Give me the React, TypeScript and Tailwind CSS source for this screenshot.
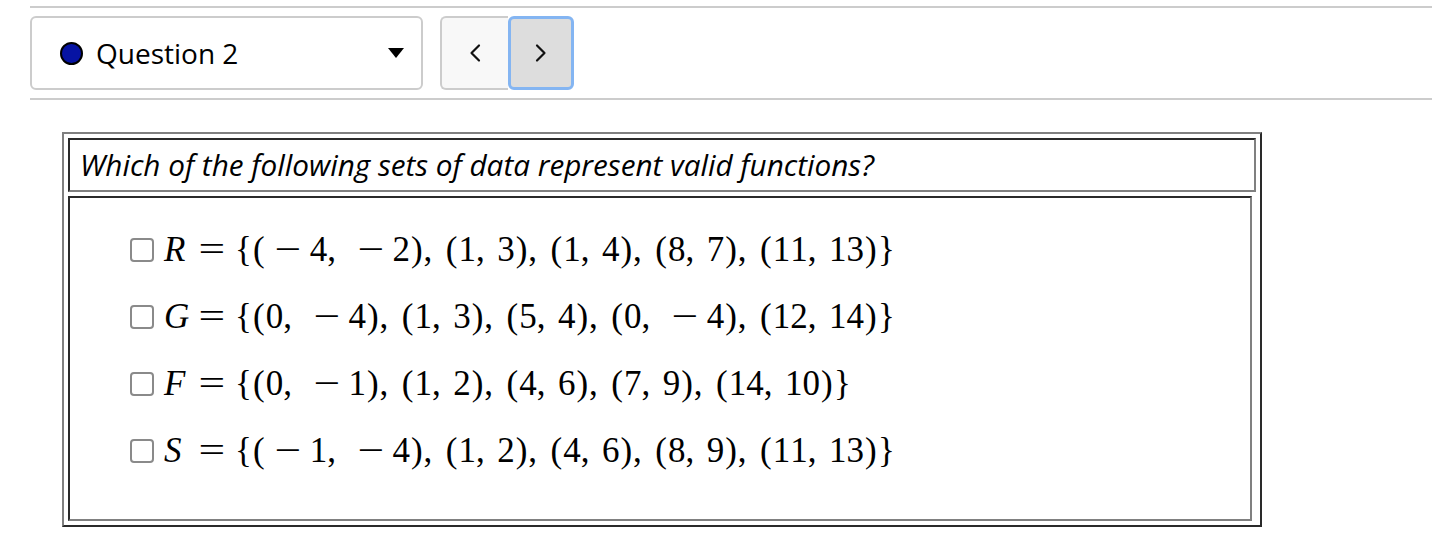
import React from "react";

type Pair = [number, number];

const rows: { v: string; pairs: Pair[] }[] = [
  { v: "R", pairs: [[-4, -2], [1, 3], [1, 4], [8, 7], [11, 13]] },
  { v: "G", pairs: [[0, -4], [1, 3], [5, 4], [0, -4], [12, 14]] },
  { v: "F", pairs: [[0, -1], [1, 2], [4, 6], [7, 9], [14, 10]] },
  { v: "S", pairs: [[-1, -4], [1, 2], [4, 6], [8, 9], [11, 13]] },
];

function Digits({ n }: { n: number }) {
  return (
    <>
      {String(n)
        .split("")
        .map((d, i) => (
          <span key={i} className="inline-block w-[0.5em] text-center">
            {d}
          </span>
        ))}
    </>
  );
}

function N({ n }: { n: number }) {
  if (n < 0) {
    return (
      <>
        <span className="mx-[0.24em] inline-block w-[0.778em] text-center">
          <span className="inline-block scale-x-[1.35]">−</span>
        </span>
        <Digits n={Math.abs(n)} />
      </>
    );
  }
  return <Digits n={n} />;
}

function Comma() {
  return <span className="mr-[0.33em] inline-block w-[0.278em] text-left">,</span>;
}

function Open() {
  return <span className="inline-block w-[0.389em] text-center">(</span>;
}
function Close() {
  return <span className="inline-block w-[0.389em] text-center">)</span>;
}

function MathRow({ v, pairs }: { v: string; pairs: Pair[] }) {
  return (
    <span
      className="whitespace-nowrap text-[35px] leading-none text-black"
      style={{ fontFamily: '"Liberation Serif", "DejaVu Serif", serif' }}
    >
      <span className="inline-block w-[0.72em] italic">{v}</span>
      <span className="mx-[0.26em] inline-block w-[0.778em] text-center">
        <span className="inline-block scale-x-[1.35]">=</span>
      </span>
      <span className="inline-block w-[0.5em] text-center">{"{"}</span>
      {pairs.map((p, i) => (
        <span key={i}>
          <Open />
          <N n={p[0]} />
          <Comma />
          <N n={p[1]} />
          <Close />
          {i < pairs.length - 1 && <Comma />}
        </span>
      ))}
      <span className="inline-block w-[0.5em] text-center">{"}"}</span>
    </span>
  );
}

function Chevron({ dir }: { dir: "l" | "r" }) {
  return (
    <svg width="14" height="20" viewBox="0 0 14 20" fill="none">
      <polyline
        points={dir === "l" ? "11,2.5 3.5,10 11,17.5" : "3,2.5 10.5,10 3,17.5"}
        stroke="#111"
        strokeWidth="2.2"
        strokeLinecap="round"
        strokeLinejoin="round"
      />
    </svg>
  );
}

export default function App() {
  return (
    <div
      className="min-h-[548px] bg-white pt-[6px] pl-[30px]"
      style={{ fontFamily: '"Open Sans", "Noto Sans", sans-serif' }}
    >
      <div className="border-y-2 border-[#cccccc] py-[8px]">
        <div className="flex items-center">
          <div className="flex h-[74px] w-[393px] items-center rounded-[6px] border-2 border-[#cccccc] bg-white pl-[28px] pr-[17px]">
            <span className="h-[23px] w-[23px] rounded-full border-2 border-black bg-[#0613a3]" />
            <span className="ml-[13px] text-[28px] leading-none text-black">Question 2</span>
            <span className="ml-auto h-0 w-0 border-x-[8px] border-t-[10px] border-x-transparent border-t-black" />
          </div>
          <div className="ml-[17px] flex h-[74px]">
            <div className="flex w-[68px] items-center justify-center rounded-l-[6px] border-2 border-r-0 border-[#cccccc] bg-[#f8f8f8]">
              <Chevron dir="l" />
            </div>
            <div className="flex w-[66px] items-center justify-center rounded-[6px] border-[3px] border-[#84b5f2] bg-[#dddddd]">
              <Chevron dir="r" />
            </div>
          </div>
        </div>
      </div>

      <div className="ml-[32px] mt-[32px] w-[1200px] border-2 border-t-[#808080] border-l-[#808080] border-b-[#2a2a2a] border-r-[#2a2a2a] p-[4px]">
        <div className="flex h-[54px] items-center border-2 border-t-[#2a2a2a] border-l-[#2a2a2a] border-b-[#808080] border-r-[#808080] pl-[10px]">
          <span className="text-[29.7px] italic leading-none text-black">
            Which of the following sets of data represent valid functions?
          </span>
        </div>
        <div className="mt-[4px] h-[325px] w-[1184px] border-2 border-t-[#2a2a2a] border-l-[#2a2a2a] border-b-[#808080] border-r-[#808080] pl-[60px] pt-[18px]">
          {rows.map((r) => (
            <div key={r.v} className="flex h-[67px] items-center">
              <span className="mr-[10px] h-[24px] w-[24px] shrink-0 rounded-[4px] border-2 border-[#8a8a8a] bg-white" />
              <MathRow v={r.v} pairs={r.pairs} />
            </div>
          ))}
        </div>
      </div>
    </div>
  );
}
